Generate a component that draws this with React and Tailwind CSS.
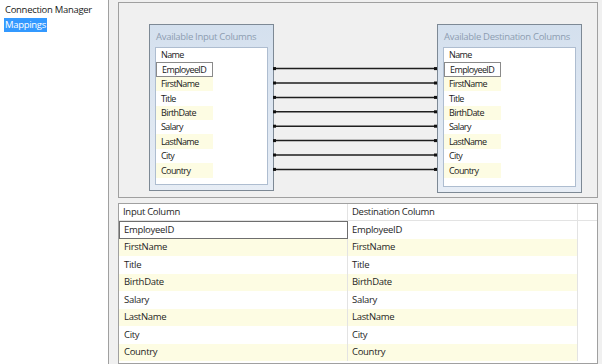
import React from "react";

const columns = ["EmployeeID", "FirstName", "Title", "BirthDate", "Salary", "LastName", "City", "Country"];

// row centers inside the diagram panel (panel content starts at y=3)
const lineYs = columns.map((_, i) => 65.6 + 14.4 * i);

function ColumnBox({ title, className }) {
  return (
    <div
      className={`absolute top-[21px] flex flex-col border border-[#7d8995] bg-linear-to-b from-[#d4e0ee] to-[#e7edf5] px-[5px] pb-[5px] ${className}`}
    >
      <div className="flex h-[22px] items-end pb-[3px] pl-[1px] text-[9.5px] tracking-[-0.3px] whitespace-nowrap text-[#8d9db1]">
        {title}
      </div>
      <div className="flex-1 border border-[#aebdd0] bg-white">
        <div className="w-[57px] text-[9px] tracking-[-0.6px] text-[#1a1a1a]">
          <div className="flex h-[14.4px] items-center pl-[5px]">Name</div>
          {columns.map((c, i) => (
            <div
              key={c}
              className={`flex h-[14.4px] items-center pl-[5px] ${
                i === 0 ? "border border-[#8a8a8a] pl-[4px]" : i % 2 === 1 ? "bg-[#fdfce3]" : ""
              }`}
            >
              {c}
            </div>
          ))}
        </div>
      </div>
    </div>
  );
}

export default function App() {
  return (
    <div className="flex h-[364px] w-[602px] overflow-hidden bg-[#f0f0f0] font-['Open_Sans',sans-serif]">
      {/* left nav */}
      <div className="h-full w-[109px] border-r border-[#a0a0a0] bg-white pt-[3px] text-[9.5px] tracking-[-0.3px] text-[#1a1a1a]">
        <div className="pl-[5px] leading-[14px]">Connection Manager</div>
        <div className="ml-[4px] mt-[1px] inline-block bg-[#3399ff] px-[1px] leading-[14px] text-white">Mappings</div>
      </div>

      <div className="flex flex-1 flex-col pl-[9px] pr-[4px] pt-[2px]">
        {/* diagram */}
        <div className="relative h-[196px] border border-[#a0a0a0] bg-[#f0f0f0]">
          <ColumnBox title="Available Input Columns" className="left-[30px] w-[125px] h-[167px]" />
          <svg className="absolute left-0 top-0" width="478" height="194">
            {lineYs.map((y) => (
              <g key={y}>
                <line x1="155" y1={y} x2="318" y2={y} stroke="#1e1e1e" strokeWidth="1.5" />
                <rect x="154" y={y - 1.5} width="3" height="3" fill="#111" />
                <rect x="315" y={y - 1.5} width="3" height="3" fill="#111" />
              </g>
            ))}
          </svg>
          <ColumnBox title="Available Destination Columns" className="left-[318px] w-[145px] h-[169px]" />
        </div>

        {/* mapping grid */}
        <div className="mt-[5px] flex-1 border border-[#a0a0a0] bg-white text-[9.5px] tracking-[-0.3px] text-[#1e1e1e]">
          <div className="flex h-[17px] border-b border-[#e3e3e3]">
            <div className="flex w-[229px] items-center border-r border-[#e3e3e3] pl-[4px]">Input Column</div>
            <div className="flex w-[230px] items-center border-r border-[#e3e3e3] pl-[4px]">Destination Column</div>
          </div>
          {columns.map((c, i) => (
            <div key={c} className="flex h-[17.5px]">
              <div
                className={`flex w-[229px] items-center ${
                  i === 0 ? "border border-[#6e6e6e] pl-[4px]" : "border-r border-[#e3e3e3] pl-[5px]"
                } ${i % 2 === 1 ? "bg-[#fdfce3]" : ""}`}
              >
                {c}
              </div>
              <div
                className={`flex w-[230px] items-center border-r border-[#e3e3e3] pl-[4px] ${
                  i % 2 === 1 ? "bg-[#fdfce3]" : ""
                }`}
              >
                {c}
              </div>
            </div>
          ))}
        </div>
      </div>
    </div>
  );
}
